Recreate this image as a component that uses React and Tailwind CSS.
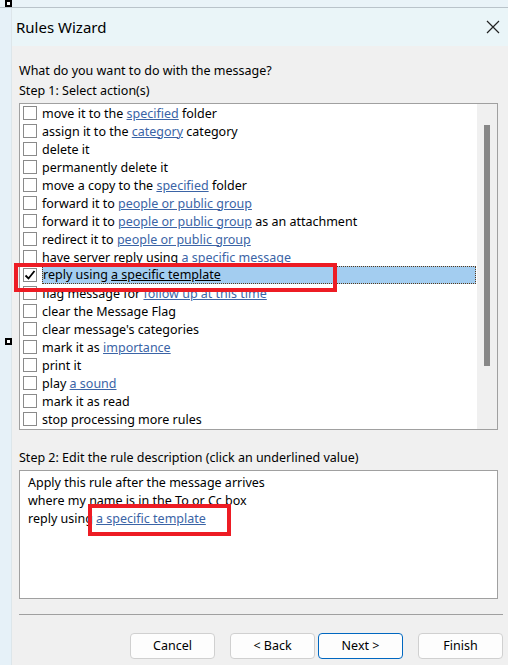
import React from 'react';

const link = (t) => ({ link: t });

const actions = [
  ['move it to the ', link('specified'), ' folder'],
  ['assign it to the ', link('category'), ' category'],
  ['delete it'],
  ['permanently delete it'],
  ['move a copy to the ', link('specified'), ' folder'],
  ['forward it to ', link('people or public group')],
  ['forward it to ', link('people or public group'), ' as an attachment'],
  ['redirect it to ', link('people or public group')],
  ['have server reply using ', link('a specific message')],
  ['reply using ', link('a specific template')],
  ['flag message for ', link('follow up at this time')],
  ['clear the Message Flag'],
  ["clear message's categories"],
  ['mark it as ', link('importance')],
  ['print it'],
  ['play ', link('a sound')],
  ['mark it as read'],
  ['stop processing more rules'],
];

function Segments({ parts, selected }) {
  return parts.map((p, i) =>
    typeof p === 'string' ? (
      <span key={i}>{p}</span>
    ) : (
      <span key={i} className={selected ? 'underline text-black' : 'underline text-[#3b64a6]'}>
        {p.link}
      </span>
    )
  );
}

function Row({ parts, selected }) {
  return (
    <div className="flex h-[18px] items-center">
      <div className="ml-[3px] flex h-[14px] w-[14px] items-center justify-center border border-[#8a8a8a] bg-white">
        {selected && (
          <svg width="12" height="12" viewBox="0 0 12 12">
            <polyline points="1.5,6.5 4.5,9.5 10.5,2" fill="none" stroke="#000" strokeWidth="1.8" />
          </svg>
        )}
      </div>
      <div
        className={
          selected
            ? 'ml-[5px] flex h-[18px] w-[434px] items-center border border-dotted border-[#5a3a1a] bg-[#a3cdf0] pt-px whitespace-pre'
            : 'ml-[5px] pt-[2px] whitespace-pre'
        }
      >
        <Segments parts={parts} selected={selected} />
      </div>
    </div>
  );
}

function Button({ children, primary }) {
  return (
    <div
      className={
        'flex h-[26px] w-[85px] items-center justify-center rounded-[4px] border bg-[#fdfdfd] ' +
        (primary ? 'border-[#0067c0]' : 'border-[#d0d0d0]')
      }
    >
      {children}
    </div>
  );
}

export default function App() {
  return (
    <div
      className="relative flex h-[665px] w-[508px] flex-col overflow-hidden bg-[#e8f2f8] text-[12.5px] text-black"
      style={{ fontFamily: '"Noto Sans", "Open Sans", sans-serif' }}
    >
      <div className="h-[8px] border-b border-[#b9c3ca] bg-[#e9f3f8]" />
      <div className="flex flex-1">
        <div className="w-[12px] bg-[#e6f1f8]" />
        <div className="flex flex-1 flex-col border-l border-[#dde6ea]">
          <div className="flex h-[38px] items-center justify-between bg-[#eaf5f8] pl-[4px] pr-[8px]">
            <div className="text-[15px]">Rules Wizard</div>
            <svg width="14" height="14" viewBox="0 0 14 14">
              <path d="M1 1 L13 13 M13 1 L1 13" stroke="#222" strokeWidth="1.2" />
            </svg>
          </div>
          <div className="flex flex-1 flex-col bg-[#f0f0f0] pl-[7px] pr-[5px]">
            <div className="mt-[16px] h-[18px] leading-[18px]">What do you want to do with the message?</div>
            <div className="mt-[2px] h-[18px] leading-[18px]">Step 1: Select action(s)</div>
            <div className="mt-[3px] mr-[5px] flex h-[327px] border border-[#a0a0a0] bg-white">
              <div className="flex-1">
                {actions.map((a, i) => (
                  <Row key={i} parts={a} selected={i === 9} />
                ))}
              </div>
              <div className="flex w-[20px] justify-center bg-[#f0f0f0] pt-[21px]">
                <div className="h-[241px] w-[6px] bg-[#888888]" />
              </div>
            </div>
            <div className="mt-[19px] h-[18px] leading-[18px]">Step 2: Edit the rule description (click an underlined value)</div>
            <div className="mt-[3px] mr-[5px] h-[129px] border border-[#a0a0a0] bg-white pl-[8px] pt-[3px] leading-[18px]">
              <div>Apply this rule after the message arrives</div>
              <div>where my name is in the To or Cc box</div>
              <div>
                reply using <span className="underline text-[#3b64a6]">a specific template</span>
              </div>
            </div>
            <div className="mt-[15px] h-px bg-[#a0a0a0]" />
            <div className="mt-[18px] flex pl-[111px] text-[12.5px]">
              <Button>Cancel</Button>
              <div className="ml-[15px] flex gap-[3px]">
                <Button>&lt; Back</Button>
                <Button primary>Next &gt;</Button>
              </div>
              <div className="ml-[15px]">
                <Button>Finish</Button>
              </div>
            </div>
          </div>
        </div>
      </div>

      {/* red highlight boxes */}
      <div className="absolute left-[14px] top-[263px] h-[29px] w-[323px] border-[4px] border-[#ed1c24]" />
      <div className="absolute left-[88px] top-[504px] h-[32px] w-[143px] border-[4px] border-[#ed1c24]" />

      {/* resize handles */}
      <div className="absolute left-[5px] top-0 h-[7px] w-[7px] border-2 border-black bg-white" />
      <div className="absolute left-[5px] top-[338px] h-[7px] w-[7px] border-2 border-black bg-white" />
    </div>
  );
}
